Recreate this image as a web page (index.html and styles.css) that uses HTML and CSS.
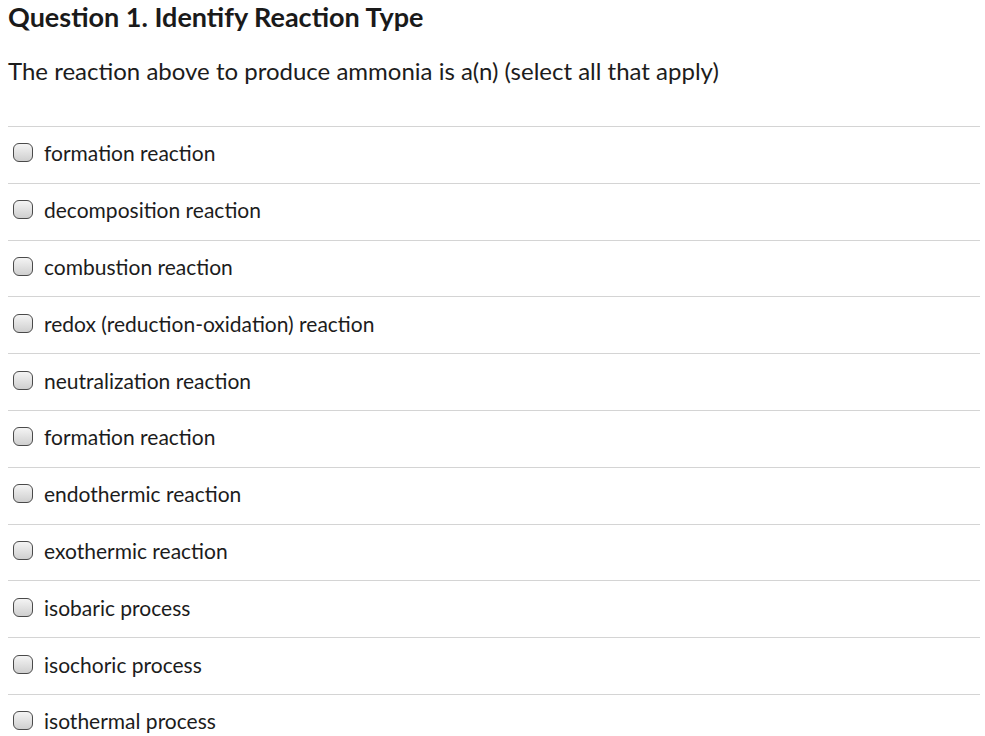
FILE: index.html
```html
<!DOCTYPE html>
<html>
<head>
<meta charset="utf-8">
<link rel="stylesheet" href="styles.css">
</head>
<body>
<div class="page">
  <h1 class="title">Question 1. Identify Reaction Type</h1>
  <p class="prompt">The reaction above to produce ammonia is a(n) (select all that apply)</p>
  <ul class="options">
    <li class="option"><span class="box"></span><span class="label">formation reaction</span></li>
    <li class="option"><span class="box"></span><span class="label">decomposition reaction</span></li>
    <li class="option"><span class="box"></span><span class="label">combustion reaction</span></li>
    <li class="option"><span class="box"></span><span class="label">redox (reduction-oxidation) reaction</span></li>
    <li class="option"><span class="box"></span><span class="label">neutralization reaction</span></li>
    <li class="option"><span class="box"></span><span class="label">formation reaction</span></li>
    <li class="option"><span class="box"></span><span class="label">endothermic reaction</span></li>
    <li class="option"><span class="box"></span><span class="label">exothermic reaction</span></li>
    <li class="option"><span class="box"></span><span class="label">isobaric process</span></li>
    <li class="option"><span class="box"></span><span class="label">isochoric process</span></li>
    <li class="option"><span class="box"></span><span class="label">isothermal process</span></li>
  </ul>
</div>
</body>
</html>
```

FILE: styles.css
```css
html, body {
  margin: 0;
  padding: 0;
  background: #ffffff;
}
body {
  font-family: Lato, "Open Sans", sans-serif;
  color: #1c1c1c;
}
.page {
  padding: 0 5px 0 8px;
}
.title {
  margin: 0;
  font-size: 27px;
  font-weight: 700;
  line-height: 34px;
  color: #1a1a1a;
}
.prompt {
  margin: 0;
  padding-top: 22px;
  font-size: 24px;
  line-height: 30px;
  color: #1c1c1c;
}
.options {
  list-style: none;
  margin: 0;
  padding: 0;
  margin-top: 40px;
}
.option {
  box-sizing: border-box;
  display: flex;
  align-items: center;
  height: 56.8px;
  border-top: 1px solid #d4d4d4;
  gap: 11px;
  padding-left: 5px;
  padding-bottom: 4px;
}
.box {
  width: 18px;
  height: 17px;
  border: 1.5px solid #4a4a4a;
  border-radius: 6px;
  background: linear-gradient(#f4f4f4, #cfcfcf);
  flex: none;
}
.label {
  font-size: 21px;
  color: #1c1c1c;
}
```
